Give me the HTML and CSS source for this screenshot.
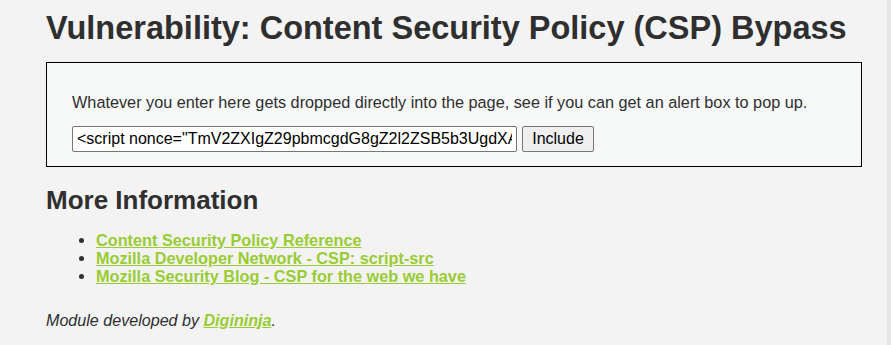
FILE: index.html
```html
<!DOCTYPE html>
<html>
<head>
<meta charset="utf-8">
<link rel="stylesheet" href="styles.css">
</head>
<body>
<div class="page">
  <div class="main">
    <h1 class="title">Vulnerability: Content Security Policy (CSP) Bypass</h1>
    <div class="code-area">
      <p class="intro">Whatever you enter here gets dropped directly into the page, see if you can get an alert box to pop up.</p>
      <form class="include-form">
        <input class="field" type="text" value='&lt;script nonce="TmV2ZXIgZ29pbmcgdG8gZ2l2ZSB5b3UgdXA="&gt;alert(1)&lt;/script&gt;'>
        <button class="btn" type="button">Include</button>
      </form>
    </div>
    <h2 class="subtitle">More Information</h2>
    <ul class="links">
      <li><a href="#">Content Security Policy Reference</a></li>
      <li><a href="#">Mozilla Developer Network - CSP: script-src</a></li>
      <li><a href="#">Mozilla Security Blog - CSP for the web we have</a></li>
    </ul>
    <p class="credit">Module developed by <a href="#">Digininja</a>.</p>
  </div>
  <div class="edge"></div>
</div>
</body>
</html>
```
FILE: styles.css
```css
html, body {
  margin: 0;
  padding: 0;
  height: 100%;
}
body {
  background: #f3f3f3;
  font-family: "Liberation Sans", Arial, sans-serif;
  color: #2f2f2f;
}
.page {
  display: flex;
  min-height: 100%;
}
.main {
  flex: 1;
  padding: 0 25px 0 46px;
}
.edge {
  width: 4px;
  background: #e7e7e7;
}
.title {
  font-size: 32.5px;
  font-weight: bold;
  margin: 10px 0 15px 0;
  line-height: 37px;
}
.code-area {
  background: #f7f8f8;
  border: 1px solid #000;
  padding: 30px 15px 14px 25px;
  width: 774px;
}
.intro {
  font-size: 16.25px;
  margin: 0 0 15px 0;
  line-height: 18px;
}
.include-form {
  display: flex;
  gap: 5px;
  margin: 0;
}
.field {
  width: 445px;
  height: 26px;
  box-sizing: border-box;
  border: 1px solid #767676;
  border-radius: 2px;
  background: #fff;
  font-family: "Liberation Sans", Arial, sans-serif;
  font-size: 16px;
  color: #000;
  padding: 0 4px;
}
.btn {
  width: 72px;
  height: 26px;
  box-sizing: border-box;
  border: 1px solid #767676;
  border-radius: 2px;
  background: #efefef;
  font-family: "Liberation Sans", Arial, sans-serif;
  font-size: 16px;
  color: #000;
  padding: 0;
}
.subtitle {
  font-size: 26px;
  font-weight: bold;
  margin: 18px 0 0 0;
  line-height: 30px;
}
.links {
  margin: 16px 0 0 0;
  padding-left: 50px;
  font-size: 16.25px;
  line-height: 18px;
}
.links a, .credit a {
  color: #99cc33;
  font-weight: bold;
}
.credit {
  font-style: italic;
  font-size: 16.1px;
  margin: 26px 0 0 0;
  line-height: 18px;
}
```
